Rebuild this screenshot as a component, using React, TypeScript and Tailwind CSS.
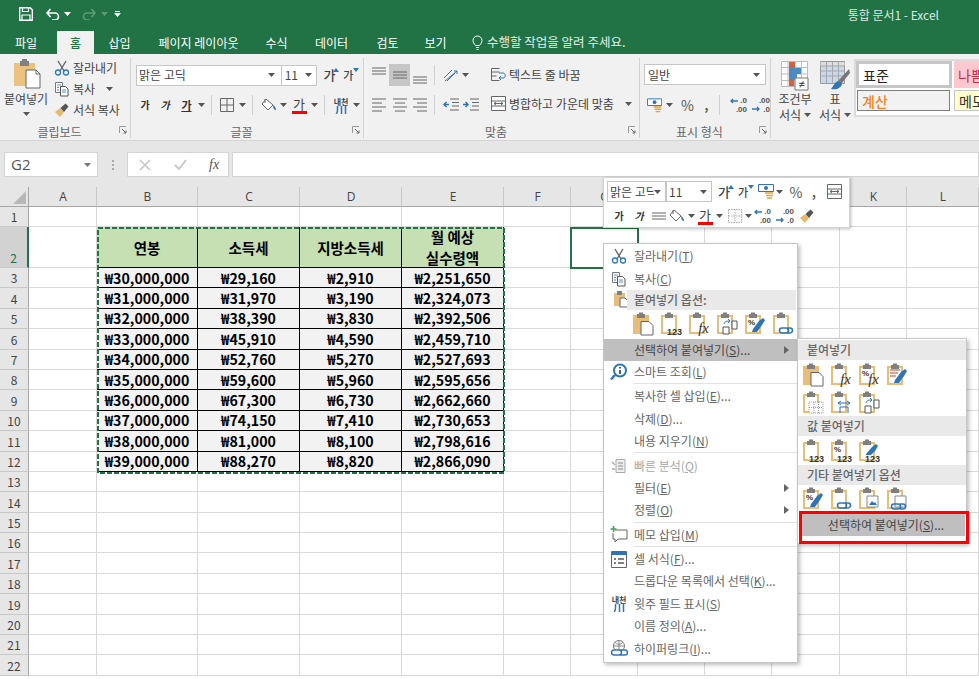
import { ReactNode } from "react";

const GREEN = "#217346";
const FONT = '"Noto Sans CJK KR", "Noto Sans", sans-serif';

const Caret = ({ className = "", color = "#555" }: { className?: string; color?: string }) => (
  <svg width="7" height="4" viewBox="0 0 7 4" className={className}>
    <path d="M0 0h7L3.500 4z" fill={color} />
  </svg>
);

const ArrowSlot = ({ className = "w-[10px]" }: { className?: string }) => (
  <div className={`flex justify-center shrink-0 ${className}`}>
    <Caret />
  </div>
);

const VSep = ({ className = "mx-[4px] h-[22px]" }: { className?: string }) => (
  <div className={`w-px bg-[#d0d0d0] shrink-0 ${className}`} />
);

const Launcher = () => (
  <svg width="8" height="8" viewBox="0 0 8 8" className="shrink-0">
    <path d="M0.500 7V0.500H7" fill="none" stroke="#999" />
    <path d="M3 3l4 4M7 4.500V7H4.500" fill="none" stroke="#666" />
  </svg>
);

const Group = ({ className, label, launcher = true, children }: { className: string; label?: string; launcher?: boolean; children: ReactNode }) => (
  <div className={`flex flex-col shrink-0 border-r border-[#d2d2d2] mt-[4px] mb-[2px] ${className}`}>
    <div className="h-[66px] shrink-0">{children}</div>
    <div className="h-[14px] shrink-0 flex items-end pr-[3px]">
      <div className="flex-1 text-center text-[12px] leading-none text-[#666]">{label}</div>
      <div className="h-[12px]">{launcher && <Launcher />}</div>
    </div>
  </div>
);

const FontGlyph = ({ up, down }: { up?: boolean; down?: boolean }) => (
  <div className="relative w-[16px] h-[18px] text-[#444] font-medium text-[13px] leading-[18px]">
    <span className={down ? "text-[11px]" : ""}>가</span>
    {up && <svg width="6" height="4" viewBox="0 0 6 4" className="absolute right-0 top-[2px]"><path d="M0 4L3 0l3 4z" fill="#2f75b5" /></svg>}
    {down && <svg width="6" height="4" viewBox="0 0 6 4" className="absolute right-0 top-[2px]"><path d="M0 0h6L3 4z" fill="#2f75b5" /></svg>}
  </div>
);

const RedGa = () => (
  <div className="flex flex-col items-center w-[16px]">
    <span className="text-[13px] leading-[14px] text-[#444]">가</span>
    <div className="h-[3px] w-[15px] bg-[#f00]" />
  </div>
);

const SmallGa = ({ className = "" }: { className?: string }) => (
  <span className={`text-[10px] leading-none font-bold text-[#333] text-center shrink-0 ${className}`}>가</span>
);

const Lines = ({ kind }: { kind: "left" | "center" | "right" | "top" | "middle" | "bottom" }) => {
  const rows: Record<string, string> = {
    left: "M1 3h14M1 7h10M1 11h14M1 15h10",
    center: "M1 3h14M3 7h10M1 11h14M3 15h10",
    right: "M1 3h14M5 7h10M1 11h14M5 15h10",
    top: "M1 2h14M1 5h14M1 8h14",
    middle: "M1 6h14M1 9h14M1 12h14",
    bottom: "M1 11h14M1 14h14M1 17h14",
  };
  return (
    <svg width="16" height="18" viewBox="0 0 16 18">
      <path d={rows[kind]} stroke="#666" strokeWidth="1" fill="none" />
    </svg>
  );
};

const Indent = ({ dir }: { dir: "in" | "out" }) => (
  <svg width="16" height="14" viewBox="0 0 16 14">
    <path d="M7 1h9M9 4.500h7M9 8h7M7 12h9" stroke="#666" fill="none" />
    <path d={dir === "out" ? "M6 6.500H1M3.500 4L1 6.500L3.500 9" : "M0 6.500h5M2.500 4L5 6.500L2.500 9"} stroke="#2f75b5" strokeWidth="1.500" fill="none" />
  </svg>
);

const BorderIcon = ({ light }: { light?: boolean }) => (
  <svg width="14" height="14" viewBox="0 0 14 14">
    <path d="M.5.500h13v13H.5zM7 .500v13M.5 7h13" fill="none" stroke={light ? "#aaa" : "#666"} strokeDasharray={light ? "1.500 1" : undefined} />
  </svg>
);

const FillIcon = () => (
  <svg width="17" height="15" viewBox="0 0 17 15">
    <path d="M6 1l7 6-5 5-6-6z" fill="#fff" stroke="#666" />
    <path d="M5 1V5" stroke="#666" />
    <path d="M13 7c2 1 3 3 3 5-2 0-3-2-3-5z" fill="#2f75b5" />
  </svg>
);

const NaeCheon = () => (
  <div className="flex flex-col items-center leading-none w-[16px]">
    <span className="text-[8px] font-bold text-[#444] leading-[9px]">내천</span>
    <svg width="13" height="8" viewBox="0 0 13 8"><path d="M2.500 0v4Q2.500 7 1 8M6.500 0v8M10.500 0v8" stroke="#2f75b5" strokeWidth="1.500" fill="none" /></svg>
  </div>
);

const Currency = () => (
  <svg width="16" height="17" viewBox="0 0 16 17">
    <path d="M.5 1.500h15v7H.5z" fill="#fff" stroke="#2f75b5" />
    <circle cx="8" cy="5" r="2" fill="#2f75b5" />
    <path d="M7 10h8M8 12.500h7M9 15h5" stroke="#e8a33d" strokeWidth="1.500" />
  </svg>
);

const Decimal = ({ inc }: { inc?: boolean }) => (
  <div className="relative w-[18px] h-[18px] text-[8px] leading-[9px] text-[#555] font-bold" style={{ fontFamily: '"Liberation Sans", sans-serif' }}>
    <span className="absolute right-0 top-0">{inc ? ".00" : ".0"}</span>
    <span className="absolute right-0 bottom-0">{inc ? ".0" : ".00"}</span>
    <svg width="9" height="6" viewBox="0 0 9 6" className={`absolute left-0 ${inc ? "bottom-[2px]" : "top-[2px]"}`}>
      <path d={inc ? "M0 3h7M5 1l2 2-2 2" : "M9 3H2M4 1L2 3l2 2"} stroke="#2f75b5" strokeWidth="1.300" fill="none" />
    </svg>
  </div>
);

const Brush = ({ size = 16 }: { size?: number }) => (
  <svg width={size} height={size} viewBox="0 0 16 16">
    <path d="M1 10l5-4 4 4-4 5z" fill="#e8b96a" />
    <path d="M6.500 6l5-4.500 3 3L10 10z" fill="#555" />
  </svg>
);

const MergeIcon = () => (
  <svg width="15" height="15" viewBox="0 0 15 15">
    <path d="M.5.500h14v14H.5zM.5 5h14M.5 10h14" fill="#fff" stroke="#666" />
    <path d="M3 7.500h9M3 7.500l2-1.500M3 7.500l2 1.500M12 7.500l-2-1.500M12 7.500l-2 1.500" stroke="#2f75b5" fill="none" />
  </svg>
);

const WrapIcon = () => (
  <svg width="15" height="15" viewBox="0 0 15 15">
    <path d="M.5 1.500h8M.5 5h8M.5 9h5M.5 1.500v12h8" fill="none" stroke="#666" />
    <path d="M8 6h4c3 0 3 5 0 5H8M10 9l-2 2 2 2" fill="none" stroke="#2f75b5" />
  </svg>
);

const ScissorsIcon = () => (
  <svg width="16" height="16" viewBox="0 0 16 16">
    <path d="M4 1l6 10M12 1L6 11" stroke="#666" strokeWidth="1.400" fill="none" />
    <circle cx="4" cy="12.500" r="2.500" fill="none" stroke="#2f75b5" strokeWidth="1.300" />
    <circle cx="12" cy="12.500" r="2.500" fill="none" stroke="#2f75b5" strokeWidth="1.300" />
  </svg>
);

const CopyIcon = () => (
  <svg width="16" height="16" viewBox="0 0 16 16">
    <path d="M1.500 1.500h7v10h-7z" fill="#fff" stroke="#777" />
    <path d="M6.500 5.500h5l2.500 2.500v7h-7.500z" fill="#fff" stroke="#555" />
    <path d="M3 4h4M3 6.500h2M3 9h2M8 9h4M8 11h4" stroke="#2f75b5" strokeWidth=".8" />
  </svg>
);

const PasteBig = () => (
  <svg width="28" height="30" viewBox="0 0 28 30">
    <path d="M1 4h21v23H1z" fill="#edc27f" />
    <path d="M7 2h9v5H7z" fill="#808080" />
    <path d="M9 0h5v3H9z" fill="#808080" />
    <path d="M13 11h10l4 4v14H13z" fill="#fff" stroke="#666" />
    <path d="M23 11v4h4" fill="none" stroke="#666" />
  </svg>
);

type ClipKind = "paste" | "123" | "fx" | "pctfx" | "brush" | "noborder" | "width" | "swap" | "pct123" | "brush123" | "pctbrush" | "link" | "pic" | "piclink" | "pasteSmall";

const Clip = ({ kind }: { kind: ClipKind }) => {
  const solid = kind === "paste" || kind === "pasteSmall";
  return (
    <svg width="22" height="24" viewBox="0 0 22 24" className="shrink-0">
      <path d="M1 3h16v19H1z" fill="#e8bd7a" />
      {!solid && <path d="M3 5h12v15H3z" fill="#fff" />}
      <path d="M5 2h8v4H5z" fill="#7f7f7f" />
      <path d="M7 0.500h4v2H7z" fill="#7f7f7f" />
      {solid && <path d="M9 9.500h8l4 4v9.500H9z" fill="#fff" stroke="#666" />}
      {(kind === "123" || kind === "pct123" || kind === "brush123") && (
        <text x="22" y="23" textAnchor="end" fontSize="9" fontWeight="700" fill="#333" fontFamily="Liberation Sans">123</text>
      )}
      {(kind === "fx" || kind === "pctfx") && (
        <text x="21" y="21" textAnchor="end" fontSize="15" fontStyle="italic" fill="#333" fontFamily="Liberation Serif">fx</text>
      )}
      {(kind === "pctfx" || kind === "pct123" || kind === "pctbrush") && (
        <text x="4" y="13" fontSize="8" fontWeight="700" fill="#333" fontFamily="Liberation Sans">%</text>
      )}
      {(kind === "brush" || kind === "brush123" || kind === "pctbrush") && (
        <path d={kind === "brush123" ? "M8 15l6-7 4-3 2 2-3 5-4 4H8z" : "M9 17l6-8 4-3 2 2-3 5-5 7H8z"} fill="#2f75b5" />
      )}
      {kind === "brush" && <path d="M4 7h10M4 10h8M4 13h6" stroke="#d9826a" strokeWidth="1.500" />}
      {kind === "noborder" && <path d="M7 11h14v11H7zM12 11v11M16.500 11v11M7 16.500h14" fill="#fff" stroke="#999" strokeDasharray="1 1" />}
      {kind === "width" && <path d="M8 12h12M8 12l3-2M8 12l3 2M20 12l-3-2M20 12l-3 2M10 16h8M10 16v6M18 16v6" stroke="#2f75b5" fill="none" />}
      {kind === "swap" && (
        <>
          <path d="M7 15h6v7H7zM16 9h5v8h-5z" fill="#fff" stroke="#555" />
          <path d="M8 12c1-3 3-3 6-3M12 7l2 2-2 2" stroke="#2f75b5" fill="none" />
        </>
      )}
      {kind === "link" && (
        <path d="M10 16h4a2.500 2.500 0 010 5h-4a2.500 2.500 0 010-5zM15 16h3a2.500 2.500 0 010 5h-3" fill="none" stroke="#2f75b5" strokeWidth="1.600" />
      )}
      {(kind === "pic" || kind === "piclink") && <path d="M9 9h11v11H9z" fill="#fff" stroke="#888" />}
      {kind === "pic" && <path d="M11 18l3-4 2 2 1-1 2 3z" fill="#2f75b5" />}
      {kind === "piclink" && <path d="M8 17h4a2.500 2.500 0 010 5H8a2.500 2.500 0 010-5zM14 17h3a2.500 2.500 0 010 5h-3" fill="none" stroke="#2f75b5" strokeWidth="1.500" />}
    </svg>
  );
};

const Hotkey = ({ text, k, after = "" }: { text: string; k: string; after?: string }) => (
  <span>
    {text}(<span className="underline">{k}</span>){after}
  </span>
);

type MenuEntry = { text: string; k: string; after?: string; icon?: ReactNode; arrow?: boolean; dim?: boolean; sep?: boolean };

const SmartIcon = () => (
  <svg width="18" height="18" viewBox="0 0 18 18">
    <circle cx="10" cy="7.500" r="6" fill="#fff" stroke="#2f75b5" strokeWidth="2" />
    <path d="M5 12l-4 4.500" stroke="#2f75b5" strokeWidth="2.500" />
    <path d="M10 4v1.500M10 7v4" stroke="#1f4e79" strokeWidth="1.800" />
  </svg>
);

const QuickIcon = () => (
  <svg width="16" height="16" viewBox="0 0 16 16">
    <path d="M5 1.500h9v13H5z" fill="#eee" stroke="#aaa" />
    <path d="M7 5h5M7 8h5M7 11h5M1 4l3 3M1 11h3" stroke="#aaa" strokeWidth="1.300" />
  </svg>
);

const MemoIcon = () => (
  <svg width="18" height="17" viewBox="0 0 18 17">
    <path d="M5 4h12v9H8l-3 3v-3H3V7" fill="#fff" stroke="#666" />
    <path d="M3.500 0v6M.5 3h6" stroke="#3fa35b" strokeWidth="1.600" />
  </svg>
);

const CellFormat = () => (
  <svg width="16" height="17" viewBox="0 0 16 17">
    <path d="M.5.500h15v16H.5z" fill="#fff" stroke="#666" />
    <path d="M.5 1h15v3H.5z" fill="#2f75b5" />
    <path d="M3 8h2M7 8h6M3 12h2M7 12h6" stroke="#555" strokeWidth="1.300" />
  </svg>
);

const GlobeLink = () => (
  <svg width="17" height="17" viewBox="0 0 17 17">
    <circle cx="8" cy="6" r="5.500" fill="#fff" stroke="#777" />
    <path d="M2.500 6h11M8 .500v11M4 2c2 3 6 3 8 0" stroke="#888" fill="none" />
    <path d="M3 10h5a2.500 2.500 0 010 5H3a2.500 2.500 0 010-5zM9 10h5a2.500 2.500 0 010 5H9" fill="#fff" stroke="#2f75b5" strokeWidth="1.500" />
  </svg>
);

const menuGroupA: MenuEntry[] = [
  { text: "스마트 조회", k: "L", icon: <SmartIcon />, sep: true },
  { text: "복사한 셀 삽입", k: "E", after: "..." },
  { text: "삭제", k: "D", after: "..." },
  { text: "내용 지우기", k: "N", sep: true },
  { text: "빠른 분석", k: "Q", icon: <QuickIcon />, dim: true },
  { text: "필터", k: "E", arrow: true },
  { text: "정렬", k: "O", arrow: true, sep: true },
  { text: "메모 삽입", k: "M", icon: <MemoIcon />, sep: true },
  { text: "셀 서식", k: "F", after: "...", icon: <CellFormat /> },
  { text: "드롭다운 목록에서 선택", k: "K", after: "..." },
  { text: "윗주 필드 표시", k: "S", icon: <NaeCheon /> },
  { text: "이름 정의", k: "A", after: "..." },
  { text: "하이퍼링크", k: "I", after: "...", icon: <GlobeLink /> },
];

const MenuRow = ({ e }: { e: MenuEntry }) => (
  <>
    <div className="flex items-center h-[22.4px] text-[12px] leading-none">
      <div className="w-[30px] flex justify-center shrink-0">{e.icon}</div>
      <div className={`flex-1 ${e.dim ? "text-[#a8a8a8]" : "text-[#666]"}`}>
        <Hotkey text={e.text} k={e.k} after={e.after} />
      </div>
      {e.arrow && (
        <svg width="5" height="8" viewBox="0 0 5 8" className="mr-[8px]">
          <path d="M0 0l5 4-5 4z" fill="#666" />
        </svg>
      )}
    </div>
    {e.sep && (
      <div className="h-[2px] pl-[30px]">
        <div className="h-px bg-[#e2e2e2]" />
      </div>
    )}
  </>
);

const ContextMenu = () => (
  <div className="absolute left-[603px] top-[243px] w-[195px] h-[420px] bg-white border border-[#c6c6c6] shadow-[2px_2px_4px_rgba(0,0,0,0.25)] pt-px">
    <MenuRow e={{ text: "잘라내기", k: "T", icon: <ScissorsIcon /> }} />
    <MenuRow e={{ text: "복사", k: "C", icon: <CopyIcon /> }} />
    <div className="flex items-center h-[20px]">
      <div className="w-[30px] flex justify-center items-start pl-[3px] shrink-0 h-[20px]">
        <svg width="16" height="18" viewBox="0 0 16 18">
          <path d="M1 3h11v13H1z" fill="#e8bd7a" />
          <path d="M4 1h5v4H4z" fill="#7f7f7f" />
          <path d="M7 8h5l3 3v6H7z" fill="#fff" stroke="#666" />
        </svg>
      </div>
      <div className="flex-1 h-[20px] -ml-[7px] mr-px bg-[#e9e9e9] flex items-center pl-[7px] text-[12px] font-medium text-[#666]">붙여넣기 옵션:</div>
    </div>
    <div className="flex items-center h-[29px] pl-[28px] gap-[6px]">
      {(["paste", "123", "fx", "swap", "pctbrush", "link"] as ClipKind[]).map((k) => (
        <Clip key={k} kind={k} />
      ))}
    </div>
    <div className="flex items-center h-[22px] bg-[#bfbfbf] text-[12px] text-[#444]">
      <div className="w-[30px] shrink-0" />
      <div className="flex-1">
        <Hotkey text="선택하여 붙여넣기" k="S" after="..." />
      </div>
      <svg width="5" height="8" viewBox="0 0 5 8" className="mr-[8px]">
        <path d="M0 0l5 4-5 4z" fill="#666" />
      </svg>
    </div>
    {menuGroupA.map((e) => (
      <MenuRow key={e.text} e={e} />
    ))}
  </div>
);

const SubHeader = ({ children }: { children: ReactNode }) => (
  <div className="h-[20px] bg-[#e9e9e9] flex items-center pl-[9px] text-[12px] font-medium text-[#666] leading-none">{children}</div>
);

const ClipRow = ({ kinds, className }: { kinds: ClipKind[]; className: string }) => (
  <div className={`flex items-center gap-[6px] pl-[4px] ${className}`}>
    {kinds.map((k) => (
      <Clip key={k} kind={k} />
    ))}
  </div>
);

const SubMenu = () => (
  <div className="absolute left-[797px] top-[338px] w-[170px] h-[206px] bg-white border border-[#c6c6c6] shadow-[2px_2px_4px_rgba(0,0,0,0.25)] pt-px">
    <SubHeader>붙여넣기</SubHeader>
    <ClipRow kinds={["pasteSmall", "fx", "pctfx", "brush"]} className="h-[29px]" />
    <ClipRow kinds={["noborder", "width", "swap"]} className="h-[27px]" />
    <SubHeader>값 붙여넣기</SubHeader>
    <ClipRow kinds={["123", "pct123", "brush123"]} className="h-[29px]" />
    <SubHeader>기타 붙여넣기 옵션</SubHeader>
    <ClipRow kinds={["pctbrush", "link", "pic", "piclink"]} className="h-[28px]" />
    <div className="h-[23px] mx-px bg-[#bfbfbf] flex items-center justify-center pl-[8px] text-[12px] text-[#444]">
      <Hotkey text="선택하여 붙여넣기" k="S" after="..." />
    </div>
  </div>
);

const MiniSelect = ({ className, text }: { className: string; text: string }) => (
  <div className={`h-[21px] border border-[#c6c6c6] bg-white flex items-center pl-[2px] pr-[4px] text-[12px] text-[#444] overflow-hidden ${className}`}>
    <span className="flex-1 whitespace-nowrap overflow-hidden">{text}</span>
    <Caret className="shrink-0" />
  </div>
);

const MiniToolbar = () => (
  <div className="absolute left-[603px] top-[177px] w-[247px] h-[51px] bg-white border border-[#d4d4d4] shadow-[1px_1px_3px_rgba(0,0,0,0.25)] pl-[3px] pt-[3px]">
    <div className="flex items-center h-[21px]">
      <MiniSelect className="w-[59px]" text="맑은 고딕" />
      <MiniSelect className="w-[46px]" text="11" />
      <div className="ml-[6px] w-[20px]"><FontGlyph up /></div>
      <div className="w-[20px]"><FontGlyph down /></div>
      <Currency />
      <ArrowSlot className="w-[11px]" />
      <span className="w-[22px] text-center text-[14px] text-[#555] leading-none">%</span>
      <span className="w-[14px] text-center text-[12px] font-bold text-[#555] leading-none">,</span>
      <div className="ml-[6px]"><MergeIcon /></div>
    </div>
    <div className="flex items-center h-[22px] mt-[3px] pl-[4px]">
      <SmallGa className="w-[16px]" />
      <SmallGa className="w-[24px] italic" />
      <div className="w-[18px]"><Lines kind="middle" /></div>
      <div className="-ml-px"><FillIcon /></div>
      <ArrowSlot className="w-[12px]" />
      <RedGa />
      <ArrowSlot className="w-[13px]" />
      <div className="ml-[2px]"><BorderIcon light /></div>
      <ArrowSlot className="w-[13px]" />
      <div className="-ml-[2px]"><Decimal /></div>
      <div className="ml-[5px]"><Decimal inc /></div>
      <div className="ml-[5px]"><Brush /></div>
    </div>
  </div>
);

const ToolButton = ({ icon, text, caret }: { icon: ReactNode; text: string; caret?: boolean }) => (
  <div className="flex items-center h-[21px] gap-[3px] whitespace-nowrap text-[12px] text-[#444] leading-none">
    <div className="w-[16px] flex justify-center">{icon}</div>
    <span>{text}</span>
    {caret && <Caret className="ml-[8px]" />}
  </div>
);

const CondIcon = () => (
  <svg width="28" height="30" viewBox="0 0 28 30">
    <path d="M.5.500h26v25H.5zM.5 6.500h26M.5 13h26M.5 19.500h26M7 .500v25M14 .500v25M20.500 .500v25" fill="#fff" stroke="#bbb" />
    <path d="M8 1h6v6H8z" fill="#d5603d" />
    <path d="M8 7h12v6H8z" fill="#4a8ac5" />
    <path d="M8 13h8v6H8z" fill="#4a8ac5" />
    <path d="M8 19h5v6H8z" fill="#d5603d" />
    <path d="M14 17h13v12H14z" fill="#fff" stroke="#777" />
    <text x="20.500" y="27" textAnchor="middle" fontSize="11" fill="#333" fontFamily="Liberation Sans">≠</text>
  </svg>
);

const TableFormatIcon = () => (
  <svg width="30" height="30" viewBox="0 0 30 30">
    <path d="M.5.500h24v22H.5z" fill="#c9d8ea" stroke="#999" />
    <path d="M.5 5h24v-4H.5z" fill="#ddd" />
    <path d="M.5 5h24M.5 10h24M.5 15h24M6.500 .500v22M12.500 .500v22M18.500 .500v22" stroke="#a7a7a7" fill="none" />
    <path d="M29 8L18 20l3 3L30 12z" fill="#777" />
    <path d="M18 20c-3 1-4 4-7 8 6 1 10-1 11-5z" fill="#2f75b5" />
  </svg>
);

const StyleCell = ({ className, text }: { className: string; text: string }) => (
  <div className={`flex items-center text-[14px] leading-none pl-[4px] overflow-hidden whitespace-nowrap ${className}`}>{text}</div>
);

const Ribbon = () => (
  <div className="h-[87px] bg-[#f1f1f1] flex border-b border-[#d5d5d5] overflow-hidden">
    <Group className="w-[131px]" label="클립보드">
      <div className="flex">
        <div className="w-[51px] flex flex-col items-center pt-[1px] pl-[3px]">
          <PasteBig />
          <span className="text-[12px] leading-none mt-[4px] -ml-[2px] text-[#444] whitespace-nowrap">붙여넣기</span>
          <Caret className="mt-[7px] -ml-[2px]" />
        </div>
        <div className="pl-[3px] -mt-[1px]">
          <ToolButton icon={<ScissorsIcon />} text="잘라내기" />
          <ToolButton icon={<CopyIcon />} text="복사" caret />
          <ToolButton icon={<Brush />} text="서식 복사" />
        </div>
      </div>
    </Group>
    <Group className="w-[233px]" label="글꼴">
      <div className="flex items-center pl-[5px] h-[22px] mt-[6px]">
        <div className="w-[147px] h-[21px] bg-white border border-[#c6c6c6] flex items-center pl-[2px] pr-[6px] text-[12px] text-[#444]">
          <span className="flex-1">맑은 고딕</span>
          <Caret />
        </div>
        <div className="w-[36px] h-[21px] bg-white border border-l-0 border-[#c6c6c6] flex items-center pl-[3px] pr-[4px] text-[12px] text-[#444]">
          <span className="flex-1">11</span>
          <Caret />
        </div>
        <div className="ml-[6px] w-[20px]"><FontGlyph up /></div>
        <div className="w-[20px]"><FontGlyph down /></div>
      </div>
      <div className="flex items-center pl-[6px] h-[22px] mt-[8px]">
        <SmallGa className="w-[16px]" />
        <SmallGa className="w-[16px] ml-[4px] italic" />
        <span className="w-[20px] ml-[4px] text-center text-[11px] font-bold underline text-[#333] leading-none">가</span>
        <ArrowSlot className="w-[12px]" />
        <VSep className="mx-[3px] h-[20px]" />
        <div className="w-[16px] ml-[5px]"><BorderIcon /></div>
        <ArrowSlot className="w-[14px]" />
        <VSep className="mx-[3px] h-[20px]" />
        <div className="ml-[4px] w-[18px]"><FillIcon /></div>
        <ArrowSlot className="w-[12px]" />
        <div className="ml-[2px]"><RedGa /></div>
        <ArrowSlot className="w-[14px]" />
        <VSep className="mx-[3px] h-[20px]" />
        <div className="ml-[5px]"><NaeCheon /></div>
        <ArrowSlot className="w-[14px]" />
      </div>
    </Group>
    <Group className="w-[276px]" label="맞춤">
      <div className="flex h-full">
        <div className="w-[122px] pl-[5px] mt-[6px]">
          <div className="flex items-center h-[22px]">
            <div className="w-[20px] flex justify-center"><Lines kind="top" /></div>
            <div className="w-[21px] h-[22px] bg-[#c6c6c6] flex justify-center items-center"><Lines kind="middle" /></div>
            <div className="w-[20px] flex justify-center"><Lines kind="bottom" /></div>
            <VSep className="mx-[4px] h-[20px]" />
            <div className="w-[20px] ml-[2px] flex justify-center">
              <svg width="16" height="16" viewBox="0 0 16 16"><path d="M1 11L9 3M4 14L12 6" stroke="#666" /><path d="M2 14l12-10M14 4l-3 0M14 4l0 3" stroke="#2f75b5" fill="none" /></svg>
            </div>
            <ArrowSlot className="w-[8px]" />
          </div>
          <div className="flex items-center h-[22px] mt-[8px]">
            <div className="w-[20px] flex justify-center"><Lines kind="left" /></div>
            <div className="w-[21px] flex justify-center"><Lines kind="center" /></div>
            <div className="w-[20px] flex justify-center"><Lines kind="right" /></div>
            <VSep className="mx-[4px] h-[20px]" />
            <div className="w-[20px] ml-[2px] flex justify-center"><Indent dir="out" /></div>
            <div className="w-[20px] flex justify-center"><Indent dir="in" /></div>
          </div>
        </div>
        <div className="flex flex-col pt-[6px] gap-[8px] pl-[4px]">
          <ToolButton icon={<WrapIcon />} text="텍스트 줄 바꿈" />
          <ToolButton icon={<MergeIcon />} text="병합하고 가운데 맞춤" caret />
        </div>
      </div>
    </Group>
    <Group className="w-[131px]" label="표시 형식">
      <div className="pl-[4px] mt-[6px]">
        <div className="w-[122px] h-[21px] bg-white border border-[#c6c6c6] flex items-center pl-[3px] pr-[5px] text-[12px] text-[#444]">
          <span className="flex-1">일반</span>
          <Caret />
        </div>
        <div className="flex items-center h-[22px] mt-[9px] pl-[3px]">
          <Currency />
          <ArrowSlot className="w-[14px]" />
          <span className="w-[24px] text-center text-[14px] text-[#555] leading-none">%</span>
          <span className="w-[16px] text-center text-[12px] font-bold text-[#555] leading-none">,</span>
          <VSep className="mx-[5px] h-[20px]" />
          <div className="ml-[4px]"><Decimal /></div>
          <div className="ml-[5px]"><Decimal inc /></div>
        </div>
      </div>
    </Group>
    <div className="flex my-[4px] pl-[7px] pt-[3px]">
      <div className="w-[34px] flex flex-col items-center text-[12px] leading-[16px] text-[#444]">
        <CondIcon />
        <span className="whitespace-nowrap">조건부</span>
        <span className="flex items-center gap-[3px] whitespace-nowrap">서식<Caret /></span>
      </div>
      <div className="w-[34px] ml-[6px] flex flex-col items-center text-[12px] leading-[16px] text-[#444]">
        <TableFormatIcon />
        <span>표</span>
        <span className="flex items-center gap-[3px] whitespace-nowrap">서식<Caret /></span>
      </div>
      <div className="w-[140px] h-[58px] ml-[2px] -mt-[2px] bg-white border-2 border-[#dcdcdc] flex flex-wrap content-start">
        <StyleCell className="w-[96px] h-[27px] border-[3px] border-[#c6c6c6] bg-white text-[#222]" text="표준" />
        <StyleCell className="w-[30px] h-[27px] ml-[2px] bg-[#ffc7ce] text-[#c0304a]" text="나쁨" />
        <StyleCell className="w-[93px] h-[21px] mt-[2px] ml-[1px] border border-[#7f7f7f] bg-[#f2f2f2] text-[#f58220] font-medium" text="계산" />
        <StyleCell className="w-[30px] h-[21px] mt-[2px] ml-[4px] border border-[#c6c6c6] bg-[#ffffcc] text-[#333]" text="메모" />
      </div>
    </div>
  </div>
);

const FormulaBar = () => (
  <div className="h-[46px] bg-[#e6e6e6] pt-[11px]">
    <div className="flex items-start h-[25px]">
      <div className="ml-[4px] w-[94px] h-[25px] bg-white border border-[#d4d4d4] flex items-center pl-[6px] pr-[6px] text-[15px] text-[#555]" style={{ fontFamily: '"Open Sans", sans-serif' }}>
        <span className="flex-1">G2</span>
        <Caret color="#777" />
      </div>
      <div className="w-[29px] h-[25px] flex flex-col items-center justify-center gap-[2px]">
        <div className="w-[2px] h-[2px] bg-[#aaa]" />
        <div className="w-[2px] h-[2px] bg-[#aaa]" />
        <div className="w-[2px] h-[2px] bg-[#aaa]" />
      </div>
      <div className="w-[102px] h-[25px] bg-white border border-[#d4d4d4] flex items-center pl-[11px] gap-[23px]">
        <svg width="12" height="12" viewBox="0 0 12 12"><path d="M1 1l10 10M11 1L1 11" stroke="#c6c6c6" strokeWidth="1.600" /></svg>
        <svg width="13" height="11" viewBox="0 0 13 11"><path d="M1 6l4 4 7-9" stroke="#c6c6c6" strokeWidth="1.800" fill="none" /></svg>
        <span className="italic text-[14px] text-[#555] -ml-[1px]" style={{ fontFamily: '"Liberation Serif", serif' }}>fx</span>
      </div>
      <div className="ml-[3px] flex-1 h-[25px] bg-white border border-[#d4d4d4]" />
    </div>
  </div>
);

const colWidths = ["w-[68px]", "w-[101px]", "w-[102px]", "w-[102px]", "w-[102px]", "w-[67px]", "w-[67px]", "w-[67px]", "w-[67px]", "w-[68px]", "w-[67px]", "w-[72px]"];
const colLetters = ["A", "B", "C", "D", "E", "F", "G", "H", "I", "J", "K", "L"];

const tableRows = [
  ["₩30,000,000", "₩29,160", "₩2,910", "₩2,251,650"],
  ["₩31,000,000", "₩31,970", "₩3,190", "₩2,324,073"],
  ["₩32,000,000", "₩38,390", "₩3,830", "₩2,392,506"],
  ["₩33,000,000", "₩45,910", "₩4,590", "₩2,459,710"],
  ["₩34,000,000", "₩52,760", "₩5,270", "₩2,527,693"],
  ["₩35,000,000", "₩59,600", "₩5,960", "₩2,595,656"],
  ["₩36,000,000", "₩67,300", "₩6,730", "₩2,662,660"],
  ["₩37,000,000", "₩74,150", "₩7,410", "₩2,730,653"],
  ["₩38,000,000", "₩81,000", "₩8,100", "₩2,798,616"],
  ["₩39,000,000", "₩88,270", "₩8,820", "₩2,866,090"],
];

const SheetRow = ({ n, h, cells, head }: { n: number; h: string; cells?: string[]; head?: boolean }) => (
  <div className={`flex ${h}`}>
    <div className={`w-[29px] shrink-0 flex items-end justify-center pb-[1px] text-[12px] leading-[16px] border-b border-[#c8c8c8] ${head ? "bg-[#d2d2d2] text-[#217346] border-r-2 border-r-[#217346]" : "bg-[#e6e6e6] text-[#444] border-r border-r-[#a6a6a6]"}`}>{n}</div>
    {colWidths.map((w, i) => {
      const v = cells && i >= 1 && i <= 4 ? cells[i - 1] : undefined;
      if (v !== undefined) {
        return (
          <div key={i} className={`${w} shrink-0 flex items-center justify-center text-center border-r border-b border-black font-bold text-black whitespace-pre-line ${head ? "bg-[#c6e0b4] text-[14.5px] leading-[21px]" : "bg-[#f2f2f2] text-[14.2px] leading-none"}`}>
            {v}
          </div>
        );
      }
      return <div key={i} className={`${w} shrink-0 border-r border-b border-[#d9d9d9] bg-white`} />;
    })}
  </div>
);

const Sheet = () => (
  <div className="relative overflow-hidden h-[492px] bg-white">
    <div className="flex h-[20px] bg-[#e6e6e6]">
      <div className="w-[29px] shrink-0 border-r border-b border-[#a6a6a6] flex items-end justify-end pr-[2px] pb-[2px]">
        <svg width="13" height="13" viewBox="0 0 13 13"><path d="M13 0v13H0z" fill="#b8b8b8" /></svg>
      </div>
      {colWidths.map((w, i) => (
        <div key={i} className={`${w} shrink-0 flex items-center justify-center pl-px text-[12px] text-[#444] border-r border-r-[#c8c8c8] border-b border-b-[#a6a6a6]`} style={{ fontFamily: '"Open Sans", sans-serif' }}>
          {colLetters[i]}
        </div>
      ))}
    </div>
    <SheetRow n={1} h="h-[20px]" />
    <SheetRow n={2} h="h-[41px]" head cells={["연봉", "소득세", "지방소득세", "월 예상\n실수령액"]} />
    {Array.from({ length: 20 }).map((_, i) => (
      <SheetRow key={i} n={i + 3} h="h-[20.4px]" cells={tableRows[i]} />
    ))}
    {/* 복사 영역 점선 */}
    <svg width="408" height="247" className="absolute left-[97px] top-[40px] pointer-events-none">
      <rect x="1" y="1" width="406" height="245" fill="none" stroke="#217346" strokeWidth="2" strokeDasharray="5 2" />
    </svg>
    <div className="absolute left-[570px] top-[40px] w-[69px] h-[42px] border-2 border-[#217346] pointer-events-none" />
  </div>
);

const tabs = [
  { label: "파일", cls: "w-[52px]" },
  { label: "홈", cls: "w-[37px] ml-[5px] bg-[#f1f1f1] text-[#217346] font-medium" },
  { label: "삽입", cls: "w-[45px] ml-[3px]" },
  { label: "페이지 레이아웃", cls: "w-[107px] ml-[3px]" },
  { label: "수식", cls: "w-[49px]" },
  { label: "데이터", cls: "w-[61px]" },
  { label: "검토", cls: "w-[51px]" },
  { label: "보기", cls: "w-[45px]" },
];

export default function App() {
  return (
    <div className="relative w-[979px] h-[679px] overflow-hidden bg-white" style={{ fontFamily: FONT }}>
      <div className="h-[31px] flex items-center text-white" style={{ backgroundColor: GREEN }}>
        <div className="flex items-center -mt-[4px]">
          <div className="ml-[19px] w-[14px] h-[14px]">
            <svg width="14" height="14" viewBox="0 0 14 14">
              <path d="M.7.700h10.500L13.300 2.800v10.500H.7z" fill="none" stroke="#fff" strokeWidth="1.400" />
              <path d="M3.500 1v3.500h6V1M3 13V8h8v5" fill="none" stroke="#fff" strokeWidth="1.200" />
            </svg>
          </div>
          <svg width="14" height="12" viewBox="0 0 14 12" className="ml-[13px]">
            <path d="M1 5h8a3.500 3.500 0 010 7H6M4.500 1L1 5l3.500 4" fill="none" stroke="#fff" strokeWidth="1.600" />
          </svg>
          <Caret className="ml-[4px]" color="#fff" />
          <svg width="14" height="12" viewBox="0 0 14 12" className="ml-[11px]">
            <path d="M13 5H5a3.500 3.500 0 000 7h3M9.500 1L13 5 9.500 9" fill="none" stroke="#5f9a7a" strokeWidth="1.600" />
          </svg>
          <Caret className="ml-[5px]" color="#5f9a7a" />
          <div className="ml-[6px] flex flex-col items-center gap-[1px]">
            <div className="w-[5px] h-px bg-white" />
            <Caret color="#fff" />
          </div>
        </div>
        <div className="ml-auto mr-[40px] text-[12px] leading-none text-[#dce8e1] -mt-[2px]">통합 문서1 - Excel</div>
      </div>
      <div className="h-[23px] flex text-[12px] text-white" style={{ backgroundColor: GREEN }}>
        {tabs.map((t) => (
          <div key={t.label} className={`flex items-center justify-center shrink-0 ${t.cls}`}>
            {t.label}
          </div>
        ))}
        <div className="flex items-center ml-[14px] gap-[4px] text-[12.5px] text-[#e3eee8]">
          <svg width="11" height="15" viewBox="0 0 11 15">
            <path d="M3.500 10.500C2 8.500 1 7.500 1 5.500a4.500 4.500 0 019 0c0 2-1 3-2.500 5zM4 12.500h3M4.500 14.500h2" fill="none" stroke="#fff" />
          </svg>
          <span>수행할 작업을 알려 주세요.</span>
        </div>
      </div>
      <Ribbon />
      <FormulaBar />
      <Sheet />
      <MiniToolbar />
      <ContextMenu />
      <SubMenu />
      <div className="absolute left-[799px] top-[511px] w-[170px] h-[33px] border-[3px] border-[#f00] pointer-events-none" />
    </div>
  );
}
